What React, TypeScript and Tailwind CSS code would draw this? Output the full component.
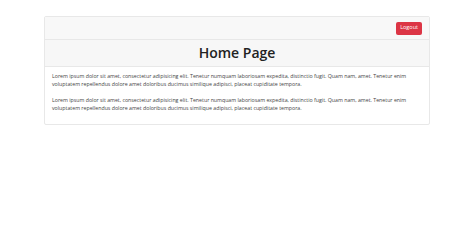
export default function App() {
  const text =
    "Lorem ipsum dolor sit amet, consectetur adipisicing elit. Tenetur numquam laboriosam expedita, distinctio fugit. Quam nam, amet. Tenetur enim voluptatem repellendus dolore amet doloribus ducimus similique adipisci, placeat cupiditate tempora.";
  return (
    <div className="w-[474px] h-[244px] bg-white pt-[16px] px-[44px]" style={{ fontFamily: '"Open Sans", sans-serif' }}>
      <div className="border border-[#e8e8e8] rounded-[2px] bg-white">
        <div className="h-[22px] bg-[#f8f8f8] flex items-center justify-end pr-[7px]">
          <button className="h-[13px] px-[4px] bg-[#dc3545] text-white text-[5.5px] rounded-[2px] leading-none">Logout</button>
        </div>
        <div className="h-[28px] bg-[#f7f7f7] border-t border-b border-[#e8e8e8] flex items-center justify-center">
          <h1 className="text-[14px] font-semibold text-[#222] leading-none">Home Page</h1>
        </div>
        <div className="px-[7px] pt-[5px] pb-[12px] text-[5.25px] leading-[8.3px] text-[#444]">
          <p className="mb-[7px]">{text}</p>
          <p>{text}</p>
        </div>
      </div>
    </div>
  );
}
